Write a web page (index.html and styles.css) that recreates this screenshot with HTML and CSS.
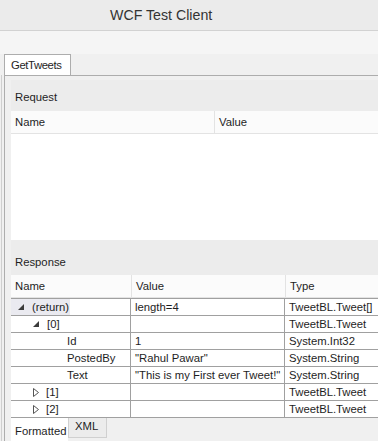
FILE: index.html
```html
<!DOCTYPE html>
<html>
<head>
<meta name="viewport" content="width=device-width, initial-scale=1">
<link rel="stylesheet" href="styles.css">
</head>
<body>

<div class="titlebar"><span class="title">WCF Test Client</span></div>
<div class="toolbar"></div>

<div class="tabs">
  <div class="tab tab--active">GetTweets</div>
</div>

<div class="panel">
  <div class="inner">

    <!-- Request part -->
    <div class="band">Request</div>
    <div class="head head--two">
      <div class="hcell">Name</div>
      <div class="hcell">Value</div>
    </div>
    <div class="empty"></div>

    <!-- Response part -->
    <div class="band band--resp">Response</div>
    <div class="head head--three">
      <div class="hcell">Name</div>
      <div class="hcell">Value</div>
      <div class="hcell">Type</div>
    </div>

    <div class="grid">
      <div class="cell lvl0"><span class="sel"><svg class="tri" width="6" height="6" viewBox="0 0 6 6"><polygon points="6,0 6,6 0,6" fill="#3c3c3c"/></svg>(return)</span></div>
      <div class="cell">length=4</div>
      <div class="cell">TweetBL.Tweet[]</div>

      <div class="cell lvl1"><svg class="tri" width="6" height="6" viewBox="0 0 6 6"><polygon points="6,0 6,6 0,6" fill="#3c3c3c"/></svg>[0]</div>
      <div class="cell"></div>
      <div class="cell">TweetBL.Tweet</div>

      <div class="cell lvl2">Id</div>
      <div class="cell">1</div>
      <div class="cell">System.Int32</div>

      <div class="cell lvl2">PostedBy</div>
      <div class="cell">"Rahul Pawar"</div>
      <div class="cell">System.String</div>

      <div class="cell lvl2">Text</div>
      <div class="cell">"This is my First ever Tweet!"</div>
      <div class="cell">System.String</div>

      <div class="cell lvl1"><svg class="tri tri--open" width="6" height="9" viewBox="0 0 6 9"><polygon points="0.5,0.5 5.5,4.5 0.5,8.5" fill="none" stroke="#555"/></svg>[1]</div>
      <div class="cell"></div>
      <div class="cell">TweetBL.Tweet</div>

      <div class="cell lvl1"><svg class="tri tri--open" width="6" height="9" viewBox="0 0 6 9"><polygon points="0.5,0.5 5.5,4.5 0.5,8.5" fill="none" stroke="#555"/></svg>[2]</div>
      <div class="cell"></div>
      <div class="cell">TweetBL.Tweet</div>
    </div>

    <div class="bottomtabs">
      <div class="btab btab--active">Formatted</div>
      <div class="btab">XML</div>
    </div>

  </div>
</div>

</body>
</html>
```

FILE: styles.css
```css
* {box-sizing: border-box;}

body {
  margin: 0;
  font-family: "Liberation Sans", Arial, sans-serif;
  font-size: 11.3px;
  color: #1e1e1e;
  background: #f0f0f0;
  overflow: hidden;
  height: 441px;
}

/* window title */
.titlebar {
  height: 31px;
  background: #ebebeb;
  border-bottom: 1px solid #d2d2d2;
  padding-left: 110px;
  line-height: 31px;
}
.title {
  font-size: 14.2px;
  color: #333;
}

.toolbar {
  height: 23px;
  background: #f5f5f5;
}

/* top tab strip */
.tabs {
  display: flex;
  height: 21px;
  padding-left: 4px;
  background: #f0f0f0;
}
.tab {
  padding: 4px 5px 0 6px;
  width: 67px;
  background: #fff;
  border: 1px solid #adadad;
  border-bottom: none;
  letter-spacing: -0.4px;
}

.panel {
  margin-left: 1px;
  border-left: 1px solid #cfcfcf;
  padding-left: 2px;
}
.inner {
  border-top: 1px solid #adadad;
  border-left: 1px solid #adadad;
  padding: 4px 0 0 6px;
  background: #f0f0f0;
}

/* Request / Response bands */
.band {
  height: 31px;
  line-height: 35px;
  padding-left: 4px;
  background: #ececec;
}
.band--resp {
  height: 35px;
  line-height: 45px;
}

.head {
  display: grid;
  height: 23px;
  background: #fbfbfb;
  border-bottom: 1px solid #e3e3e3;
}
.head--two {grid-template-columns: 203px 1fr;}
.head--three {grid-template-columns: 120px 154px 1fr;}
.hcell {
  padding-left: 4px;
  line-height: 23px;
  border-left: 1px solid #e3e3e3;
}
.hcell:first-child {border-left: none;}

.empty {
  height: 106px;
  background: #fff;
}

/* response tree grid */
.grid {
  display: grid;
  grid-template-columns: 120px 154px 1fr;
  grid-auto-rows: 17px;
  background: #fff;
  border-top: 1px solid #a0a0a0;
}
.cell {
  display: flex;
  align-items: center;
  padding-left: 4px;
  border-right: 1px solid #a0a0a0;
  border-bottom: 1px solid #a0a0a0;
  white-space: nowrap;
  overflow: hidden;
}
.cell:nth-child(3n) {border-right: none;}

.sel {
  display: flex;
  align-items: center;
  height: 16px;
  width: 59px;
  margin-left: -4px;
  padding-left: 3px;
  background: #eaeaf0;
}
.tri {margin: 0 8px 0 4px;}
.tri--open {margin: 0 7px 0 4px;}
.lvl1 {padding-left: 18px;}
.lvl2 {padding-left: 56px;}

/* bottom tabs */
.bottomtabs {
  display: flex;
  height: 24px;
}
.btab {
  width: 39px;
  height: 20px;
  padding: 2px 0 0 6px;
  background: #ececec;
  border: 1px solid #d0d0d0;
  border-top: none;
}
.btab--active {
  width: 57px;
  height: 24px;
  padding: 7px 0 0 4px;
  background: #fff;
  border: none;
}
```
